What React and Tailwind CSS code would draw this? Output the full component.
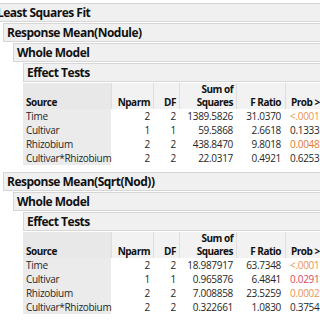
import React from "react";

const font = { fontFamily: '"Open Sans", "Noto Sans", sans-serif' };

const cols = "grid grid-cols-[88px_42px_26px_57px_49px_90px]";

function Title({ children }) {
  return (
    <div className="h-[19px] mb-px flex items-center pl-[3px] bg-[#f0f0f0] border-y border-l border-[#d6d6d6] text-[12px] font-bold text-[#111] leading-none whitespace-nowrap tracking-[-0.5px]">
      {children}
    </div>
  );
}

function EffectTable({ rows }) {
  return (
    <div className="text-[10px] text-[#262626] leading-[14px] tracking-[-0.3px]">
      <div className={`${cols} h-[26px] font-bold text-[#111] leading-[13px] tracking-[-0.5px]`}>
        <div className="bg-[#e8e8e8] flex items-end pl-[3px]">Source</div>
        <div className="bg-[#f2f2f2] flex items-end justify-end pr-[3px] border-l border-[#dedede]">Nparm</div>
        <div className="bg-[#f2f2f2] flex items-end justify-end pr-[3px] border-l border-[#dedede]">DF</div>
        <div className="bg-[#f2f2f2] flex flex-col items-end justify-end pr-[3px] border-l border-[#dedede]">
          <span>Sum of</span>
          <span>Squares</span>
        </div>
        <div className="bg-[#f2f2f2] flex items-end justify-end pr-[4px] border-l border-[#dedede]">F Ratio</div>
        <div className="bg-[#f2f2f2] flex items-end pl-[5px] border-l border-[#dedede] whitespace-nowrap">Prob &gt; F</div>
      </div>
      {rows.map((r) => (
        <div key={r[0]} className={`${cols} h-[14px]`}>
          <div className="bg-[#ebebeb] pl-[3px] whitespace-nowrap">{r[0]}</div>
          <div className="text-right pr-[3px]">{r[1]}</div>
          <div className="text-right pr-[3px]">{r[2]}</div>
          <div className="text-right pr-[3px]">{r[3]}</div>
          <div className="text-right pr-[4px]">{r[4]}</div>
          <div className={`pl-[5px] ${r[6]}`}>{r[5]}</div>
        </div>
      ))}
    </div>
  );
}

function Section({ title, rows }) {
  return (
    <div className="mb-[7px]">
      <Title>{title}</Title>
      <div className="ml-[10px]">
        <Title>Whole Model</Title>
        <div className="ml-[10px]">
          <Title>Effect Tests</Title>
          <EffectTable rows={rows} />
        </div>
      </div>
    </div>
  );
}

const orange = "text-[#eb9552]";
const dark = "text-[#262626]";
const red = "text-[#dc4a5c]";

const nodule = [
  ["Time", "2", "2", "1389.5826", "31.0370", "<.0001*", orange],
  ["Cultivar", "1", "1", "59.5868", "2.6618", "0.1333", dark],
  ["Rhizobium", "2", "2", "438.8470", "9.8018", "0.0048*", "text-[#e07a30]"],
  ["Cultivar*Rhizobium", "2", "2", "22.0317", "0.4921", "0.6253", dark],
];

const sqrt = [
  ["Time", "2", "2", "18.987917", "63.7348", "<.0001*", orange],
  ["Cultivar", "1", "1", "0.965876", "6.4841", "0.0291*", red],
  ["Rhizobium", "2", "2", "7.008858", "23.5259", "0.0002*", orange],
  ["Cultivar*Rhizobium", "2", "2", "0.322661", "1.0830", "0.3754", dark],
];

export default function App() {
  return (
    <div className="w-[320px] h-[320px] overflow-hidden bg-white" style={font}>
      <div className="w-[420px] ml-[-7px] pt-[3px]">
        <Title>Least Squares Fit</Title>
        <div className="ml-[10px]">
          <Section title="Response Mean(Nodule)" rows={nodule} />
          <Section title="Response Mean(Sqrt(Nod))" rows={sqrt} />
        </div>
      </div>
    </div>
  );
}
